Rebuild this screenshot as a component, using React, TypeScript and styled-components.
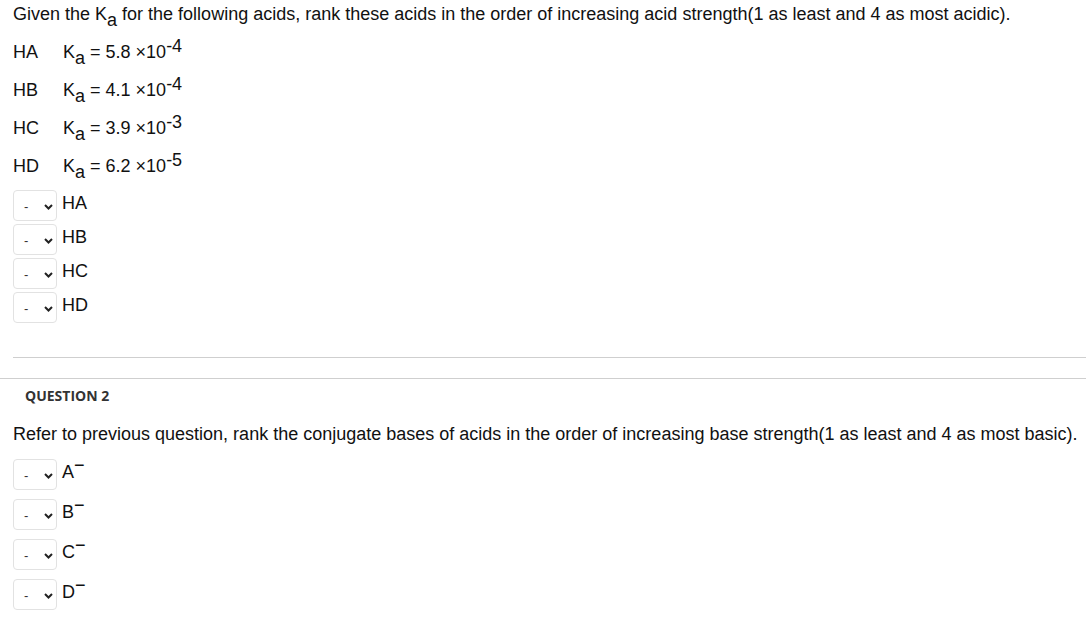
import React from "react";
import styled, { createGlobalStyle } from "styled-components";

const Global = createGlobalStyle`
  html, body { margin: 0; padding: 0; background: #fff; }
  body { font-family: "Liberation Sans", Arial, sans-serif; font-size: 18px; color: #111; }
`;

const Page = styled.div`
  width: 1086px;
  display: flex;
  flex-direction: column;
`;

const Section = styled.div`
  padding-left: 13px;
  display: flex;
  flex-direction: column;
`;

const Prompt = styled.div<{ $h: number; $top?: number }>`
  margin-top: ${(p) => p.$top ?? 0}px;
  height: ${(p) => p.$h}px;
  line-height: ${(p) => p.$h}px;
  white-space: nowrap;
`;

const Sub = styled.span`
  position: relative;
  top: 6px;
  line-height: 0;
`;

const Sup = styled.span<{ $up?: number }>`
  position: relative;
  top: -${(p) => p.$up ?? 6}px;
  line-height: 0;
`;

const AcidTable = styled.div`
  margin-top: 5px;
  display: grid;
  grid-template-columns: 50px auto;
  grid-auto-rows: 38px;
  align-items: center;
`;

const Cell = styled.div`
  white-space: nowrap;
`;

const SelectList = styled.div<{ $gap: number; $top: number }>`
  margin-top: ${(p) => p.$top}px;
  display: flex;
  flex-direction: column;
  gap: ${(p) => p.$gap}px;
`;

const SelectRow = styled.div`
  display: flex;
  align-items: flex-start;
  gap: 5px;
`;

const Box = styled.div`
  box-sizing: border-box;
  width: 44px;
  height: 31px;
  border: 1px solid #e2e2e2;
  border-radius: 4px;
  background: #fff;
  display: flex;
  align-items: center;
  padding: 2px 0 0 10px;
`;

const Dash = styled.span`
  font-size: 13px;
  color: #333;
  width: 20px;
`;

const Label = styled.span`
  line-height: 26px;
  white-space: nowrap;
`;

const Rule = styled.hr<{ $inset: number; $top: number }>`
  margin: ${(p) => p.$top}px 0 0 ${(p) => p.$inset}px;
  border: none;
  border-top: 1px solid #cfcfcf;
  height: 0;
`;

const QHeader = styled.div`
  margin-top: 8px;
  padding-left: 25px;
  height: 17px;
  line-height: 17px;
  font-family: "Open Sans", "Liberation Sans", sans-serif;
  font-weight: 700;
  font-size: 14px;
  color: #333;
`;

const Chevron = () => (
  <svg width="9" height="6" viewBox="0 0 9 6">
    <polyline points="1,1 4.5,4.5 8,1" fill="none" stroke="#222" strokeWidth="2" />
  </svg>
);

const Dropdown = ({ label }: { label: React.ReactNode }) => (
  <SelectRow>
    <Box>
      <Dash>-</Dash>
      <Chevron />
    </Box>
    <Label>{label}</Label>
  </SelectRow>
);

const acids = [
  ["HA", "5.8", "-4"],
  ["HB", "4.1", "-4"],
  ["HC", "3.9", "-3"],
  ["HD", "6.2", "-5"],
];

export default function App() {
  return (
    <Page>
      <Global />
      <Section>
        <Prompt $h={28}>
          Given the K<Sub>a</Sub> for the following acids, rank these acids in the order of increasing acid strength(1 as least and 4 as most acidic).
        </Prompt>
        <AcidTable>
          {acids.map(([n, v, e]) => (
            <React.Fragment key={n}>
              <Cell>{n}</Cell>
              <Cell>
                K<Sub>a</Sub> = {v} ×10<Sup>{e}</Sup>
              </Cell>
            </React.Fragment>
          ))}
        </AcidTable>
        <SelectList $gap={3} $top={5}>
          {["HA", "HB", "HC", "HD"].map((l) => (
            <Dropdown key={l} label={l} />
          ))}
        </SelectList>
      </Section>
      <Rule $inset={13} $top={34} />
      <Rule $inset={0} $top={20} />
      <QHeader>QUESTION 2</QHeader>
      <Section>
        <Prompt $h={28} $top={16}>
          Refer to previous question, rank the conjugate bases of acids in the order of increasing base strength(1 as least and 4 as most basic).
        </Prompt>
        <SelectList $gap={9} $top={11}>
          {["A", "B", "C", "D"].map((l) => (
            <Dropdown
              key={l}
              label={
                <>
                  {l}
                  <Sup $up={7}>−</Sup>
                </>
              }
            />
          ))}
        </SelectList>
      </Section>
    </Page>
  );
}
